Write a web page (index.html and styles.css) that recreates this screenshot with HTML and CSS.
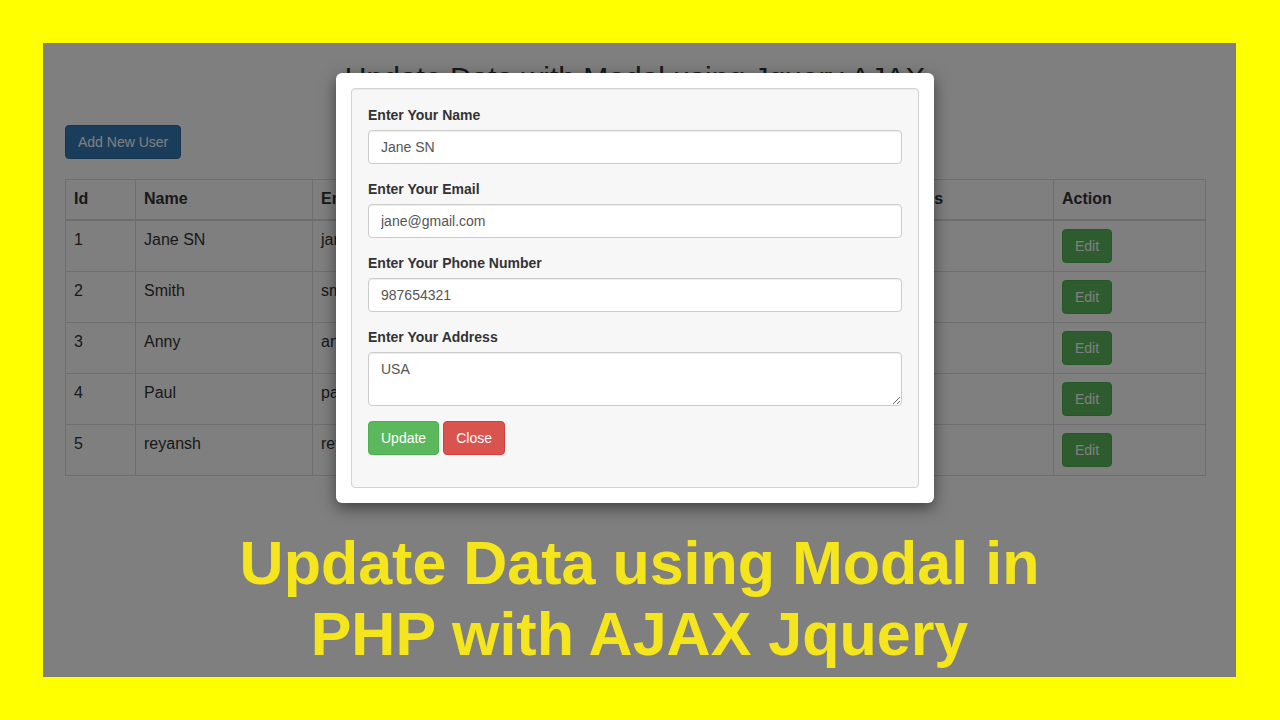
FILE: index.html
```html
<!DOCTYPE html>
<html lang="en">
<head>
<meta charset="utf-8">
<title>Update Data with Modal using Jquery AJAX</title>
<link rel="stylesheet" href="styles.css">
</head>
<body>
<div class="frame">
  <div class="page">
    <h2 class="page-title">Update Data with Modal using Jquery AJAX</h2>
    <button class="btn btn-primary">Add New User</button>
    <table class="users">
      <thead>
        <tr>
          <th class="c-id">Id</th>
          <th class="c-name">Name</th>
          <th class="c-email">Email</th>
          <th class="c-phone">Phone</th>
          <th class="c-address">Address</th>
          <th class="c-action">Action</th>
        </tr>
      </thead>
      <tbody>
        <tr><td>1</td><td>Jane SN</td><td>jane@gmail.com</td><td>987654321</td><td>USA</td><td><button class="btn btn-success">Edit</button></td></tr>
        <tr><td>2</td><td>Smith</td><td>smith@gmail.com</td><td>9876543210</td><td>UK</td><td><button class="btn btn-success">Edit</button></td></tr>
        <tr><td>3</td><td>Anny</td><td>anny@gmail.com</td><td>9876501234</td><td>USA</td><td><button class="btn btn-success">Edit</button></td></tr>
        <tr><td>4</td><td>Paul</td><td>paul@gmail.com</td><td>9876123450</td><td>UK</td><td><button class="btn btn-success">Edit</button></td></tr>
        <tr><td>5</td><td>reyansh</td><td>reyansh@gmail.com</td><td>9871234560</td><td>USA</td><td><button class="btn btn-success">Edit</button></td></tr>
      </tbody>
    </table>
  </div>

  <div class="backdrop"></div>

  <div class="modal">
    <form class="well">
      <div class="form-group">
        <label>Enter Your Name</label>
        <input class="form-control" type="text" value="Jane SN">
      </div>
      <div class="form-group">
        <label>Enter Your Email</label>
        <input class="form-control" type="text" value="jane@gmail.com">
      </div>
      <div class="form-group">
        <label>Enter Your Phone Number</label>
        <input class="form-control" type="text" value="987654321">
      </div>
      <div class="form-group">
        <label>Enter Your Address</label>
        <textarea class="form-control textarea" rows="2">USA</textarea>
      </div>
      <div class="form-actions">
        <button type="button" class="btn btn-success">Update</button>
        <button type="button" class="btn btn-danger">Close</button>
      </div>
    </form>
  </div>

  <div class="caption">
    <span class="caption-line">Update Data using Modal in</span>
    <span class="caption-line">PHP with AJAX Jquery</span>
  </div>
</div>
</body>
</html>
```

FILE: styles.css
```css
* { box-sizing: border-box; }

html, body { margin: 0; padding: 0; }

body {
  background: #ffff00;
  padding: 43px 44px 43px 43px;
  font-family: "Liberation Sans", Arial, sans-serif;
  color: #333;
}

.frame {
  position: relative;
  width: 1193px;
  height: 634px;
  overflow: hidden;
  background: #fff;
}

.page {
  padding: 18px 31px 0 22px;
  font-size: 16px;
  line-height: 1.42857;
}

.page-title {
  margin: 0 0 31px;
  font-size: 30px;
  font-weight: normal;
  line-height: 33px;
  text-align: center;
  color: #333;
}

.btn {
  display: inline-block;
  padding: 6px 12px;
  font-family: inherit;
  font-size: 14px;
  line-height: 20px;
  border: 1px solid transparent;
  border-radius: 4px;
  color: #fff;
  cursor: pointer;
  white-space: nowrap;
}

.btn-primary { background: #337ab7; border-color: #2e6da4; }
.btn-success { background: #5cb85c; border-color: #4cae4c; }
.btn-danger  { background: #d9534f; border-color: #d43f3a; }

.users {
  width: 1140px;
  margin-top: 20px;
  border-collapse: collapse;
  table-layout: fixed;
  border: 1px solid #ddd;
}

.users th,
.users td {
  padding: 8px;
  border: 1px solid #ddd;
  text-align: left;
  vertical-align: top;
  line-height: 1.42857;
}

.users th {
  font-weight: bold;
  vertical-align: bottom;
  border-bottom: 2px solid #ddd;
}

.c-id { width: 70px; }
.c-name { width: 177px; }
.c-email { width: 290px; }
.c-phone { width: 268px; }
.c-address { width: 183px; }
.c-action { width: 152px; }

.backdrop {
  position: absolute;
  inset: 0;
  background: rgba(0, 0, 0, 0.5);
}

.modal {
  position: absolute;
  left: 293px;
  top: 30px;
  width: 598px;
  padding: 15px;
  background: #fff;
  border-radius: 6px;
  box-shadow: 0 5px 15px rgba(0, 0, 0, 0.5);
}

.well {
  margin: 0;
  padding: 16px 16px 1px;
  background: #f7f7f7;
  border: 1px solid #d3d3d3;
  border-radius: 4px;
  box-shadow: inset 0 1px 1px rgba(0, 0, 0, 0.05);
}

.form-group { margin-bottom: 15px; }

.form-group label {
  display: block;
  margin-bottom: 5px;
  font-size: 14px;
  font-weight: bold;
  line-height: 20px;
  color: #333;
}

.form-control {
  display: block;
  width: 100%;
  height: 34px;
  padding: 6px 12px;
  font-family: inherit;
  font-size: 14px;
  line-height: 20px;
  color: #555;
  background: #fff;
  border: 1px solid #ccc;
  border-radius: 4px;
  box-shadow: inset 0 1px 1px rgba(0, 0, 0, 0.075);
}

.textarea {
  height: 54px;
  resize: vertical;
}

.form-actions {
  display: flex;
  gap: 4px;
  margin-bottom: 31px;
}

.caption {
  position: absolute;
  left: 0;
  right: 0;
  top: 485px;
  text-align: center;
  font-family: "Liberation Sans", Arial, sans-serif;
  font-weight: bold;
  font-size: 61px;
  line-height: 71px;
  color: #f4e51c;
}

.caption-line { display: block; }
```
